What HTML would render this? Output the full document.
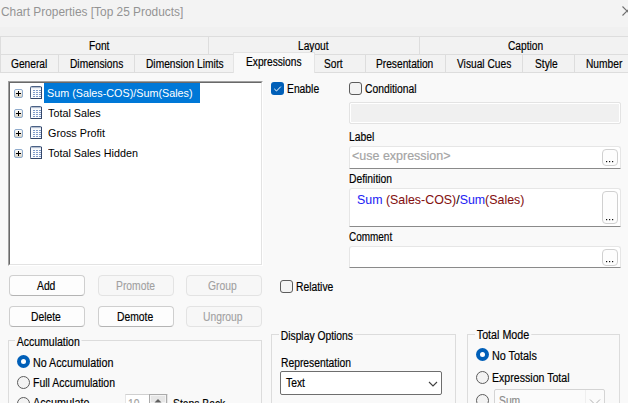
<!DOCTYPE html>
<html><head><meta charset="utf-8">
<style>
*{margin:0;padding:0;box-sizing:border-box}
html,body{width:628px;height:403px;overflow:hidden}
body{position:relative;background:#f9f9f9;font-family:"Liberation Sans",sans-serif;font-size:12px;color:#000}
.a{position:absolute}
.t{position:absolute;white-space:nowrap;line-height:1;font-size:12px;transform-origin:0 0;transform:scaleX(.86);-webkit-text-stroke:0.18px currentColor}
.tab{position:absolute;background:#f2f2f2;border:1px solid #dddddd}
.tt{transform:scaleX(.85)}
.list{font-size:11px;transform:scaleX(.98);-webkit-text-stroke:0}
.btn{position:absolute;height:21px;width:76px;border:1px solid #cfcfcf;border-bottom-color:#b4b4b4;border-radius:4px;background:#fdfdfd}
.btn.dis{border-color:#e3e3e3;background:#f7f7f7}
.gray{color:#a0a0a0;-webkit-text-stroke:0.1px currentColor}
.chk{position:absolute;width:13px;height:13px;border-radius:3px}
.chk.off{border:1px solid #5c5c5c;background:#f3f3f3}
.edit{position:absolute;background:#fff;border:1px solid #e6e6e6;border-bottom:1px solid #8a8a8a;border-radius:3px 3px 0 0}
.dots{position:absolute;width:16px;border:1px solid #d0d0d0;border-radius:4px;background:#fdfdfd}
.grp{position:absolute;border:1px solid #dcdcdc}
.radio{position:absolute;width:13px;height:13px;border-radius:50%}
.radio.on{background:#005fb8}
.radio.on::after{content:"";position:absolute;left:4px;top:4px;width:5px;height:5px;border-radius:50%;background:#fff}
.radio.off{border:1px solid #5c5c5c;background:#f3f3f3}
.plus{position:absolute;width:9px;height:9px;border:1px solid #8fabcc;border-radius:2px;background:linear-gradient(#fdfdfd,#d9d3c6)}
.plus::before{content:"";position:absolute;left:1px;top:3px;width:5px;height:1.4px;background:#000}
.plus::after{content:"";position:absolute;left:3px;top:1px;width:1.4px;height:5px;background:#000}
.tbl{position:absolute;width:12px;height:13px}
.lbl{background:#f9f9f9;padding:0 2px}
</style></head><body>
<div class="a" style="left:0;top:0;width:628px;height:27px;background:#f3f3f3"></div>
<div class="a" style="left:0;top:27px;width:628px;height:9px;background:#f0f0f0"></div>
<div class="t" style="left:1px;top:6px;color:#939393;transform:scaleX(.99);-webkit-text-stroke:0">Chart Properties [Top 25 Products]</div>
<svg class="a" style="left:621px;top:5px" width="7" height="12"><path d="M1.5 1.5 L12 12 M1.5 10.5 L12 0" stroke="#6e6e6e" stroke-width="1.1" fill="none"/></svg>

<!-- tab row 1 -->
<div class="tab" style="left:0;top:36px;width:209px;height:19px"></div>
<div class="tab" style="left:208px;top:36px;width:212px;height:19px"></div>
<div class="tab" style="left:419px;top:36px;width:215px;height:19px"></div>
<div class="t tt" style="left:89px;top:40px">Font</div>
<div class="t tt" style="left:298px;top:40px">Layout</div>
<div class="t tt" style="left:508px;top:40px">Caption</div>
<!-- tab row 2 -->
<div class="tab" style="left:0;top:54px;width:59px;height:19px"></div>
<div class="tab" style="left:58px;top:54px;width:77px;height:19px"></div>
<div class="tab" style="left:134px;top:54px;width:100px;height:19px"></div>
<div class="tab" style="left:314px;top:54px;width:52px;height:19px"></div>
<div class="tab" style="left:365px;top:54px;width:81px;height:19px"></div>
<div class="tab" style="left:445px;top:54px;width:78px;height:19px"></div>
<div class="tab" style="left:522px;top:54px;width:53px;height:19px"></div>
<div class="tab" style="left:574px;top:54px;width:60px;height:19px"></div>
<div class="a" style="left:233px;top:52px;width:82px;height:21px;background:#f9f9f9;border:1px solid #e4e4e4;border-bottom:none"></div>
<div class="t tt" style="left:11px;top:58px">General</div>
<div class="t tt" style="left:70px;top:58px">Dimensions</div>
<div class="t tt" style="left:146px;top:58px">Dimension Limits</div>
<div class="t tt" style="left:246px;top:56px">Expressions</div>
<div class="t tt" style="left:324px;top:58px">Sort</div>
<div class="t tt" style="left:376px;top:58px">Presentation</div>
<div class="t tt" style="left:457px;top:58px">Visual Cues</div>
<div class="t tt" style="left:535px;top:58px">Style</div>
<div class="t tt" style="left:586px;top:58px">Number</div>

<!-- list -->
<div class="a" style="left:8px;top:81px;width:255px;height:185px;border-top:1px solid #a0a0a0;border-left:1px solid #a0a0a0;border-right:1px solid #fff;border-bottom:1px solid #fff">
 <div class="a" style="left:0;top:0;right:0;bottom:0;border-top:1px solid #696969;border-left:1px solid #696969;border-right:1px solid #e3e3e3;border-bottom:1px solid #e3e3e3;background:#fff"></div>
</div>
<div class="a" style="left:44px;top:83px;width:156px;height:20px;background:#0078d7"></div>
<div class="t list" style="left:47px;top:88px;color:#fff">Sum (Sales-COS)/Sum(Sales)</div>
<div class="t list" style="left:48px;top:108px">Total Sales</div>
<div class="t list" style="left:48px;top:128px">Gross Profit</div>
<div class="t list" style="left:48px;top:148px">Total Sales Hidden</div>
<div class="plus" style="left:14px;top:89px"></div>
<div class="plus" style="left:14px;top:109px"></div>
<div class="plus" style="left:14px;top:129px"></div>
<div class="plus" style="left:14px;top:149px"></div>
<svg class="a" style="left:0;top:0" width="50" height="170"><g transform="translate(0,86)">
  <rect x="30.5" y="0.5" width="11" height="12" rx="1" fill="#fbfcfd" stroke="#4b6185"/>
  <rect x="31" y="1" width="10" height="2" fill="#b4bfd0"/>
  <rect x="31" y="2" width="10" height="1" fill="#eef1f6"/><path d="M30.5 12.5h11M41.5 1v12" stroke="#34466a" stroke-width="1"/>
  <path d="M33 4.5h2M36 4.5h2M39 4.5h2M33 6.5h2M36 6.5h2M39 6.5h2M33 8.5h2M36 8.5h2M39 8.5h2M33 10.5h2M36 10.5h2M39 10.5h2" stroke="#7f9bcb" stroke-width="1"/>
 </g><g transform="translate(0,106)">
  <rect x="30.5" y="0.5" width="11" height="12" rx="1" fill="#fbfcfd" stroke="#4b6185"/>
  <rect x="31" y="1" width="10" height="2" fill="#b4bfd0"/>
  <rect x="31" y="2" width="10" height="1" fill="#eef1f6"/><path d="M30.5 12.5h11M41.5 1v12" stroke="#34466a" stroke-width="1"/>
  <path d="M33 4.5h2M36 4.5h2M39 4.5h2M33 6.5h2M36 6.5h2M39 6.5h2M33 8.5h2M36 8.5h2M39 8.5h2M33 10.5h2M36 10.5h2M39 10.5h2" stroke="#7f9bcb" stroke-width="1"/>
 </g><g transform="translate(0,126)">
  <rect x="30.5" y="0.5" width="11" height="12" rx="1" fill="#fbfcfd" stroke="#4b6185"/>
  <rect x="31" y="1" width="10" height="2" fill="#b4bfd0"/>
  <rect x="31" y="2" width="10" height="1" fill="#eef1f6"/><path d="M30.5 12.5h11M41.5 1v12" stroke="#34466a" stroke-width="1"/>
  <path d="M33 4.5h2M36 4.5h2M39 4.5h2M33 6.5h2M36 6.5h2M39 6.5h2M33 8.5h2M36 8.5h2M39 8.5h2M33 10.5h2M36 10.5h2M39 10.5h2" stroke="#7f9bcb" stroke-width="1"/>
 </g><g transform="translate(0,146)">
  <rect x="30.5" y="0.5" width="11" height="12" rx="1" fill="#fbfcfd" stroke="#4b6185"/>
  <rect x="31" y="1" width="10" height="2" fill="#b4bfd0"/>
  <rect x="31" y="2" width="10" height="1" fill="#eef1f6"/><path d="M30.5 12.5h11M41.5 1v12" stroke="#34466a" stroke-width="1"/>
  <path d="M33 4.5h2M36 4.5h2M39 4.5h2M33 6.5h2M36 6.5h2M39 6.5h2M33 8.5h2M36 8.5h2M39 8.5h2M33 10.5h2M36 10.5h2M39 10.5h2" stroke="#7f9bcb" stroke-width="1"/>
 </g></svg>

<!-- buttons -->
<div class="btn" style="left:9px;top:275px"></div>
<div class="btn dis" style="left:98px;top:275px"></div>
<div class="btn dis" style="left:186px;top:275px"></div>
<div class="btn" style="left:9px;top:306px"></div>
<div class="btn" style="left:98px;top:306px"></div>
<div class="btn dis" style="left:186px;top:306px"></div>
<div class="t" style="left:37px;top:280px">Add</div>
<div class="t gray" style="left:116px;top:280px">Promote</div>
<div class="t gray" style="left:208px;top:280px">Group</div>
<div class="t" style="left:31px;top:311px">Delete</div>
<div class="t" style="left:117px;top:311px">Demote</div>
<div class="t gray" style="left:203px;top:311px">Ungroup</div>

<!-- relative -->
<div class="chk off" style="left:280px;top:280px"></div>
<div class="t" style="left:296px;top:281px">Relative</div>

<!-- enable / conditional -->
<div class="chk" style="left:271px;top:82px;background:#005fb8"></div>
<svg class="a" style="left:271px;top:82px" width="13" height="13"><path d="M3.3 6.9 L5.5 9 L9.8 4.6" stroke="#fff" stroke-width="1" fill="none"/></svg>
<div class="t" style="left:287px;top:83px">Enable</div>
<div class="chk off" style="left:349px;top:82px"></div>
<div class="t" style="left:365px;top:83px">Conditional</div>
<div class="a" style="left:349px;top:102px;width:272px;height:22px;background:#f0f0f0;border:1px solid #e3e3e3;box-shadow:inset 0 0 0 1px #fff;border-radius:2px"></div>

<div class="t" style="left:349px;top:131px">Label</div>
<div class="edit" style="left:349px;top:146px;width:272px;height:23px"></div>
<div class="t" style="left:352px;top:149px;color:#a4a4a4;font-size:13px;transform:scaleX(.96)">&lt;use expression&gt;</div>
<div class="dots" style="left:602px;top:149px;height:17px"></div>
<svg class="a" style="left:605px;top:160px" width="10" height="3"><rect x="1" y="1" width="1.2" height="1.2" fill="#111"/><rect x="4" y="1" width="1.2" height="1.2" fill="#111"/><rect x="7" y="1" width="1.2" height="1.2" fill="#111"/></svg>

<div class="t" style="left:349px;top:173px">Definition</div>
<div class="edit" style="left:349px;top:188px;width:272px;height:39px"></div>
<div class="t" style="left:357px;top:194px;font-size:12.4px;transform:none;-webkit-text-stroke:0.05px currentColor"><span style="color:#2424f5">Sum</span> <span style="color:#841010">(Sales-COS)</span>/<span style="color:#2424f5">Sum</span><span style="color:#841010">(Sales)</span></div>
<div class="dots" style="left:602px;top:191px;height:33px"></div>
<svg class="a" style="left:605px;top:218px" width="10" height="3"><rect x="1" y="1" width="1.2" height="1.2" fill="#111"/><rect x="4" y="1" width="1.2" height="1.2" fill="#111"/><rect x="7" y="1" width="1.2" height="1.2" fill="#111"/></svg>

<div class="t" style="left:349px;top:231px;transform:scaleX(.83)">Comment</div>
<div class="edit" style="left:349px;top:246px;width:272px;height:22px"></div>
<div class="dots" style="left:602px;top:249px;height:17px"></div>
<svg class="a" style="left:605px;top:260px" width="10" height="3"><rect x="1" y="1" width="1.2" height="1.2" fill="#111"/><rect x="4" y="1" width="1.2" height="1.2" fill="#111"/><rect x="7" y="1" width="1.2" height="1.2" fill="#111"/></svg>

<!-- accumulation group -->
<div class="grp" style="left:8px;top:340px;width:254px;height:80px"></div>
<div class="t lbl" style="left:15px;top:336px;transform:scaleX(.875)">Accumulation</div>
<div class="radio on" style="left:17px;top:355px"></div>
<div class="t" style="left:33px;top:357px;transform:scaleX(.893)">No Accumulation</div>
<div class="radio off" style="left:17px;top:376px"></div>
<div class="t" style="left:33px;top:377px;transform:scaleX(.872)">Full Accumulation</div>
<div class="radio off" style="left:17px;top:397px"></div>
<div class="t" style="left:33px;top:397px;transform:scaleX(.9)">Accumulate</div>
<div class="a" style="left:125px;top:394px;width:43px;height:20px;background:#fff;border:1px solid #e5e5e5;border-top-color:#d0d0d0"></div>
<div class="t" style="left:128px;top:398px;color:#a0a0a0">10</div>
<div class="a" style="left:149px;top:394px;width:18px;height:10px;background:#e6e6e6;border:1px solid #ababab;box-shadow:inset 0 0 0 1px #f4f4f4"></div>
<svg class="a" style="left:151px;top:397px" width="14" height="7"><path d="M3.5 5.5 L7 2 L10.5 5.5 Z" fill="#606060"/></svg>
<div class="t" style="left:173px;top:398px">Steps Back</div>

<!-- display options -->
<div class="grp" style="left:271px;top:334px;width:185px;height:80px"></div>
<div class="t lbl" style="left:279px;top:330px">Display Options</div>
<div class="t" style="left:281px;top:357px">Representation</div>
<div class="a" style="left:280px;top:371px;width:162px;height:24px;background:#fff;border:1px solid #6e6e6e;border-radius:2px"></div>
<div class="t" style="left:286px;top:377px">Text</div>
<svg class="a" style="left:428px;top:381px" width="10" height="7"><path d="M1 1 L5 5 L9 1" stroke="#404040" stroke-width="1.1" fill="none"/></svg>

<!-- total mode -->
<div class="grp" style="left:467px;top:334px;width:153px;height:80px"></div>
<div class="t lbl" style="left:475px;top:329px;transform:scaleX(.894)">Total Mode</div>
<div class="radio on" style="left:476px;top:348px"></div>
<div class="t" style="left:492px;top:350px;transform:scaleX(.9)">No Totals</div>
<div class="radio off" style="left:476px;top:371px"></div>
<div class="t" style="left:492px;top:372px;transform:scaleX(.883)">Expression Total</div>
<div class="radio off" style="left:476px;top:394px"></div>
<div class="a" style="left:494px;top:389px;width:111px;height:22px;background:#fbfbfb;border:1px solid #d4d4d4;border-radius:2px"></div>
<div class="a" style="left:585px;top:390px;width:1px;height:20px;background:#efefef"></div>
<div class="t" style="left:499px;top:395px;color:#8c8c8c">Sum</div>
<svg class="a" style="left:589px;top:398px" width="12" height="8"><path d="M1 1.5 L6 6.5 L11 1.5" stroke="#b0b0b0" stroke-width="1" fill="none"/></svg>
</body></html>
